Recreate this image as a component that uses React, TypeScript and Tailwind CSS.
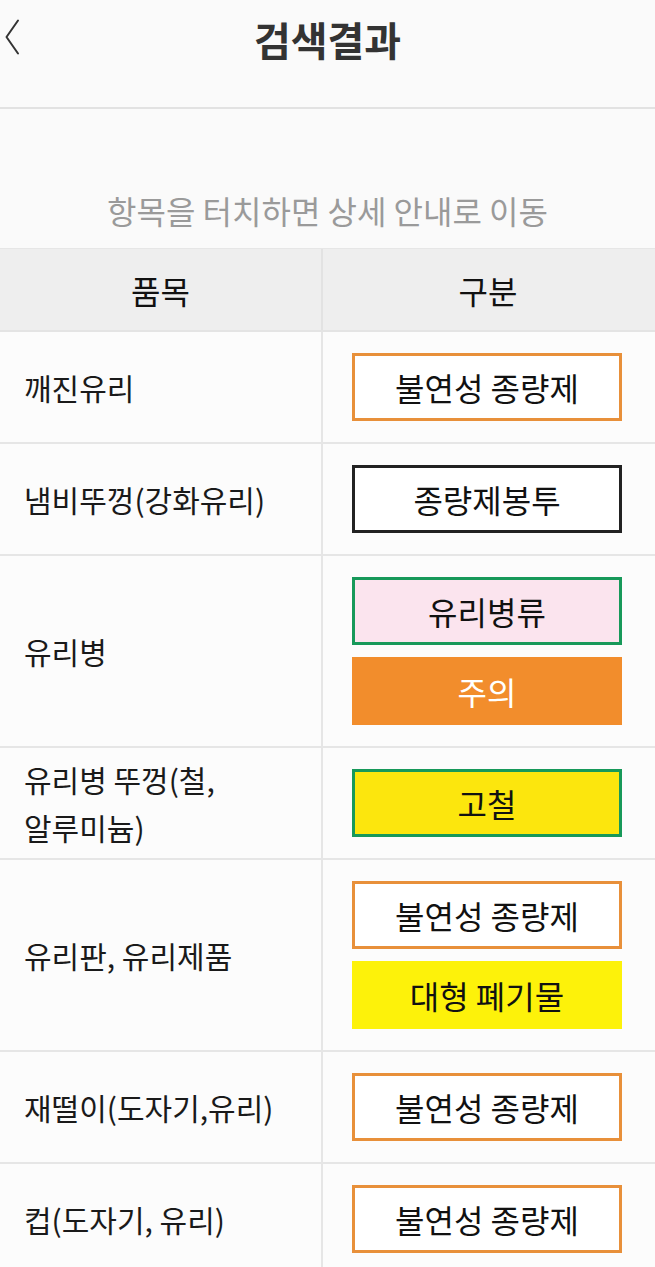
import React from "react";

type Badge = { text: string; cls: string };

const ORANGE_OUT = "border-[3px] border-[#e8903a] bg-white text-[#111]";
const BLACK_OUT = "border-[3px] border-[#222] bg-white text-[#111]";

const rows: { name: React.ReactNode; badges: Badge[] }[] = [
  { name: "깨진유리", badges: [{ text: "불연성 종량제", cls: ORANGE_OUT }] },
  { name: "냄비뚜껑(강화유리)", badges: [{ text: "종량제봉투", cls: BLACK_OUT }] },
  {
    name: "유리병",
    badges: [
      { text: "유리병류", cls: "border-[3px] border-[#17995a] bg-[#fbe4ee] text-[#111]" },
      { text: "주의", cls: "bg-[#f28d2c] text-white" },
    ],
  },
  {
    name: (
      <>
        유리병 뚜껑(철,
        <br />
        알루미늄)
      </>
    ),
    badges: [{ text: "고철", cls: "border-[3px] border-[#17995a] bg-[#fce60d] text-[#111]" }],
  },
  {
    name: "유리판, 유리제품",
    badges: [
      { text: "불연성 종량제", cls: ORANGE_OUT },
      { text: "대형 폐기물", cls: "bg-[#fdf20a] text-[#111]" },
    ],
  },
  { name: "재떨이(도자기,유리)", badges: [{ text: "불연성 종량제", cls: ORANGE_OUT }] },
  { name: "컵(도자기, 유리)", badges: [{ text: "불연성 종량제", cls: ORANGE_OUT }] },
];

export default function App() {
  return (
    <div
      className="min-h-[1267px] w-[655px] bg-[#fafafa] overflow-hidden"
      style={{ fontFamily: '"Noto Sans CJK KR", "Noto Sans", sans-serif' }}
    >
      {/* Top bar */}
      <div className="relative h-[109px] border-b-2 border-[#e2e2e2] flex items-start justify-center">
        <svg
          className="absolute left-[4px] top-[19px]"
          width="16"
          height="36"
          viewBox="0 0 16 36"
          fill="none"
        >
          <path d="M14 1.5 L2.5 18 L14 34.5" stroke="#333" strokeWidth="2" strokeLinecap="round" strokeLinejoin="round" />
        </svg>
        <h1 className="mt-[12px] text-[40px] leading-[54px] font-bold text-[#333]">검색결과</h1>
      </div>

      {/* Subtitle */}
      <div className="h-[139px] flex items-end justify-center pb-[17px]">
        <p className="text-[32px] leading-[42px] text-[#9a9a9a]">항목을 터치하면 상세 안내로 이동</p>
      </div>

      {/* Table */}
      <div className="w-full">
        <div className="flex h-[84px] bg-[#eeeeee] border-t border-[#e6e6e6] border-b-2 border-b-[#e4e4e4]">
          <div className="w-[321px] flex items-center justify-center text-[32px] text-[#111]">품목</div>
          <div className="w-[2px] bg-[#e2e2e2]" />
          <div className="flex-1 flex items-center justify-center text-[32px] text-[#111] pr-[2px]">구분</div>
        </div>
        {rows.map((r, i) => (
          <div key={i} className="flex border-b-2 border-[#e6e6e6] bg-[#fcfcfc]">
            <div className="w-[321px] flex items-center pl-[24px] pr-[8px] text-[30px] leading-[48px] text-[#1a1a1a]">
              <span>{r.name}</span>
            </div>
            <div className="w-[2px] bg-[#e6e6e6]" />
            <div className="flex-1 flex flex-col gap-[12px] py-[21px] pl-[29px]">
              {r.badges.map((b, j) => (
                <div
                  key={j}
                  className={`w-[270px] h-[68px] flex items-center justify-center text-[32px] ${b.cls}`}
                >
                  {b.text}
                </div>
              ))}
            </div>
          </div>
        ))}
      </div>
    </div>
  );
}
